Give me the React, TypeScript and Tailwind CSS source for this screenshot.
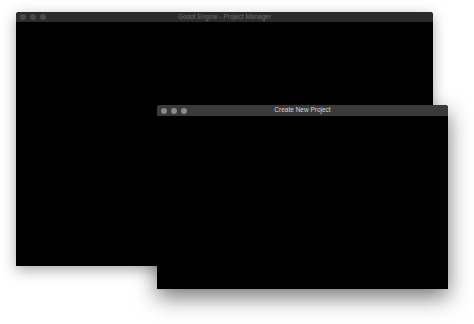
import React from "react";

function Dots({ active }: { active: boolean }) {
  const c = active ? "bg-[#8a8a8a]" : "bg-[#4a4a4a]";
  return (
    <div className="flex items-center gap-[4px]">
      <div className={`w-[6px] h-[6px] rounded-full ${c}`} />
      <div className={`w-[6px] h-[6px] rounded-full ${c}`} />
      <div className={`w-[6px] h-[6px] rounded-full ${c}`} />
    </div>
  );
}

export default function App() {
  return (
    <div
      className="relative w-[474px] h-[324px] bg-white overflow-hidden"
      style={{ fontFamily: '"Liberation Sans", Arial, sans-serif' }}
    >
      {/* Project Manager window */}
      <div className="absolute left-[16px] top-[12px] w-[417px] h-[254px] bg-black rounded-t-[3px] shadow-[0_4px_14px_rgba(0,0,0,0.35)] flex flex-col overflow-hidden">
        <div className="relative h-[10px] bg-[#2b2b2b] flex items-center px-[4px] shrink-0">
          <Dots active={false} />
          <div className="absolute inset-0 flex items-center justify-center text-[6.5px] leading-none text-[#6e6e6e]">
            Godot Engine - Project Manager
          </div>
        </div>
        <div className="flex-1 bg-black" />
      </div>

      {/* Create New Project window */}
      <div className="absolute left-[157px] top-[105px] w-[291px] h-[184px] bg-black rounded-t-[3px] shadow-[0_8px_22px_rgba(0,0,0,0.55)] flex flex-col overflow-hidden">
        <div className="relative h-[11px] bg-[#3a3a3a] flex items-center px-[4px] shrink-0">
          <Dots active={true} />
          <div className="absolute inset-0 flex items-center justify-center text-[6.5px] leading-none text-[#d8d8d8]">
            Create New Project
          </div>
        </div>
        <div className="flex-1 bg-black" />
      </div>
    </div>
  );
}
